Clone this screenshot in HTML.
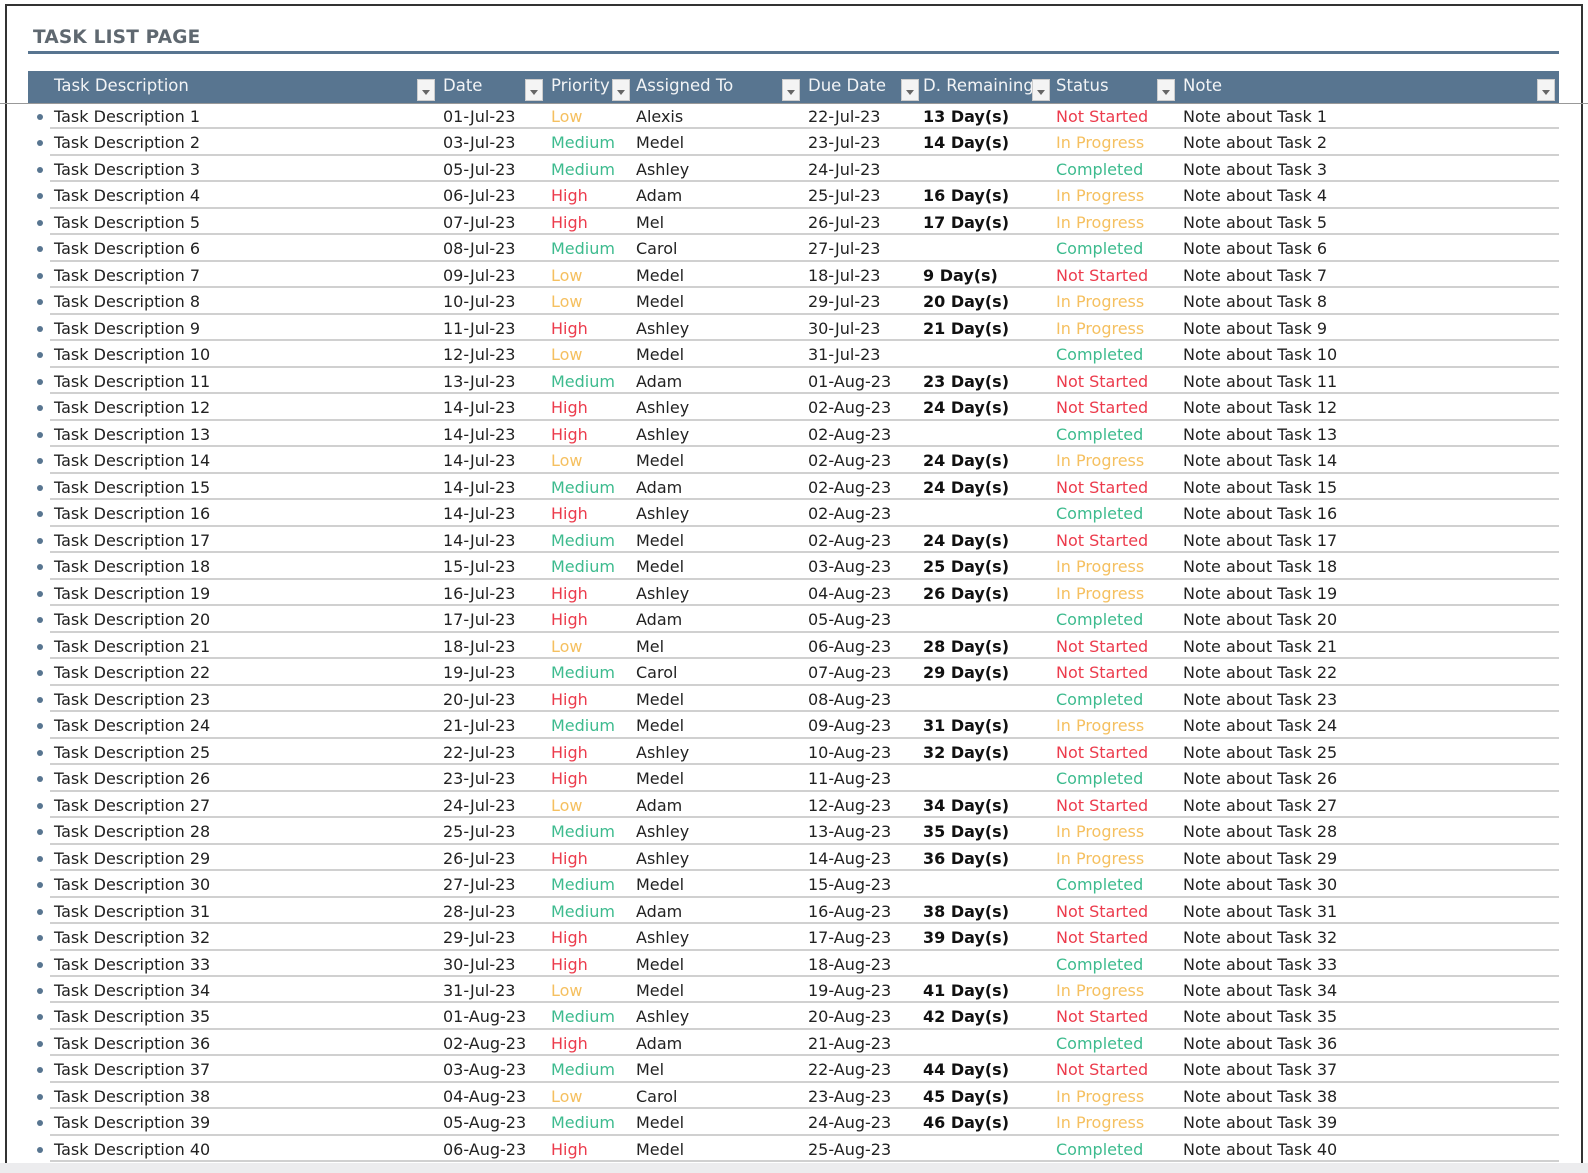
<!DOCTYPE html>
<html><head><meta charset="utf-8"><style>
*{margin:0;padding:0;box-sizing:border-box}
body{width:1588px;height:1173px;background:#fff;position:relative;overflow:hidden;font-family:"DejaVu Sans","Liberation Sans",sans-serif;font-size:16px;color:#222}
.frame{position:absolute;left:5px;top:4px;width:1578px;height:1160px;border:2px solid #333;border-bottom:none}
.bottom{position:absolute;left:0;top:1163px;width:1588px;height:10px;background:#ececee}
.title{position:absolute;left:33px;top:27px;font-size:18.5px;font-weight:bold;color:#5f6870;letter-spacing:0.2px}
.uline{position:absolute;left:28px;top:51px;width:1531px;height:3px;background:#587590}
.hdr{position:absolute;left:28px;top:71px;width:1531px;height:32px;background:#587590;color:#f2f4f6}
.hdr span{position:absolute;top:5px;font-size:16.5px}
.btn{position:absolute;top:8px;width:18px;height:22px;background:#f4f4f4;border:1px solid #ccc}
.btn:after{content:"";position:absolute;left:4px;top:10px;border-left:4px solid transparent;border-right:4px solid transparent;border-top:5px solid #666}
.gline{position:absolute;left:0;top:103px;width:1588px;height:1px;background:#999}
.rows{position:absolute;left:0;top:103px;width:1588px}
.r{position:relative;height:26.49px}
.r:after{content:"";position:absolute;left:50px;width:1509px;bottom:0;height:2px;background:#d0d0d0}
.r:before{content:"";position:absolute;left:37px;top:11px;width:6px;height:6px;border-radius:50%;background:#587590}
.r span{position:absolute;top:4px;white-space:nowrap}
.r span:nth-child(1){left:54px}
.r span:nth-child(2){left:443px}
.r span:nth-child(3){left:551px}
.r span:nth-child(4){left:636px}
.r span:nth-child(5){left:808px}
.r span:nth-child(6){left:923px;font-weight:bold;color:#111}
.r span:nth-child(7){left:1056px}
.r span:nth-child(8){left:1183px}
.L{color:#f5c060}.M{color:#3dbb8e}.H{color:#ec3b4c}
.N{color:#ec3b4c}.P{color:#f5c060}.C{color:#3dbb8e}
</style></head><body>
<div class="frame"></div>
<div class="bottom"></div>
<div class="title">TASK LIST PAGE</div>
<div class="uline"></div>
<div class="hdr">
<span style="left:26px">Task Description</span><div class="btn" style="left:389px"></div>
<span style="left:415px">Date</span><div class="btn" style="left:497px"></div>
<span style="left:523px">Priority</span><div class="btn" style="left:584px"></div>
<span style="left:608px">Assigned To</span><div class="btn" style="left:754px"></div>
<span style="left:780px">Due Date</span><div class="btn" style="left:873px"></div>
<span style="left:895px;width:112px;overflow:hidden">D. Remaining</span><div class="btn" style="left:1004px"></div>
<span style="left:1028px">Status</span><div class="btn" style="left:1129px"></div>
<span style="left:1155px">Note</span><div class="btn" style="left:1509px"></div>
</div>
<div class="gline"></div>
<div class="rows">
<div class="r"><span>Task Description 1</span><span>01-Jul-23</span><span class="L">Low</span><span>Alexis</span><span>22-Jul-23</span><span>13 Day(s)</span><span class="N">Not Started</span><span>Note about Task 1</span></div>
<div class="r"><span>Task Description 2</span><span>03-Jul-23</span><span class="M">Medium</span><span>Medel</span><span>23-Jul-23</span><span>14 Day(s)</span><span class="P">In Progress</span><span>Note about Task 2</span></div>
<div class="r"><span>Task Description 3</span><span>05-Jul-23</span><span class="M">Medium</span><span>Ashley</span><span>24-Jul-23</span><span></span><span class="C">Completed</span><span>Note about Task 3</span></div>
<div class="r"><span>Task Description 4</span><span>06-Jul-23</span><span class="H">High</span><span>Adam</span><span>25-Jul-23</span><span>16 Day(s)</span><span class="P">In Progress</span><span>Note about Task 4</span></div>
<div class="r"><span>Task Description 5</span><span>07-Jul-23</span><span class="H">High</span><span>Mel</span><span>26-Jul-23</span><span>17 Day(s)</span><span class="P">In Progress</span><span>Note about Task 5</span></div>
<div class="r"><span>Task Description 6</span><span>08-Jul-23</span><span class="M">Medium</span><span>Carol</span><span>27-Jul-23</span><span></span><span class="C">Completed</span><span>Note about Task 6</span></div>
<div class="r"><span>Task Description 7</span><span>09-Jul-23</span><span class="L">Low</span><span>Medel</span><span>18-Jul-23</span><span>9 Day(s)</span><span class="N">Not Started</span><span>Note about Task 7</span></div>
<div class="r"><span>Task Description 8</span><span>10-Jul-23</span><span class="L">Low</span><span>Medel</span><span>29-Jul-23</span><span>20 Day(s)</span><span class="P">In Progress</span><span>Note about Task 8</span></div>
<div class="r"><span>Task Description 9</span><span>11-Jul-23</span><span class="H">High</span><span>Ashley</span><span>30-Jul-23</span><span>21 Day(s)</span><span class="P">In Progress</span><span>Note about Task 9</span></div>
<div class="r"><span>Task Description 10</span><span>12-Jul-23</span><span class="L">Low</span><span>Medel</span><span>31-Jul-23</span><span></span><span class="C">Completed</span><span>Note about Task 10</span></div>
<div class="r"><span>Task Description 11</span><span>13-Jul-23</span><span class="M">Medium</span><span>Adam</span><span>01-Aug-23</span><span>23 Day(s)</span><span class="N">Not Started</span><span>Note about Task 11</span></div>
<div class="r"><span>Task Description 12</span><span>14-Jul-23</span><span class="H">High</span><span>Ashley</span><span>02-Aug-23</span><span>24 Day(s)</span><span class="N">Not Started</span><span>Note about Task 12</span></div>
<div class="r"><span>Task Description 13</span><span>14-Jul-23</span><span class="H">High</span><span>Ashley</span><span>02-Aug-23</span><span></span><span class="C">Completed</span><span>Note about Task 13</span></div>
<div class="r"><span>Task Description 14</span><span>14-Jul-23</span><span class="L">Low</span><span>Medel</span><span>02-Aug-23</span><span>24 Day(s)</span><span class="P">In Progress</span><span>Note about Task 14</span></div>
<div class="r"><span>Task Description 15</span><span>14-Jul-23</span><span class="M">Medium</span><span>Adam</span><span>02-Aug-23</span><span>24 Day(s)</span><span class="N">Not Started</span><span>Note about Task 15</span></div>
<div class="r"><span>Task Description 16</span><span>14-Jul-23</span><span class="H">High</span><span>Ashley</span><span>02-Aug-23</span><span></span><span class="C">Completed</span><span>Note about Task 16</span></div>
<div class="r"><span>Task Description 17</span><span>14-Jul-23</span><span class="M">Medium</span><span>Medel</span><span>02-Aug-23</span><span>24 Day(s)</span><span class="N">Not Started</span><span>Note about Task 17</span></div>
<div class="r"><span>Task Description 18</span><span>15-Jul-23</span><span class="M">Medium</span><span>Medel</span><span>03-Aug-23</span><span>25 Day(s)</span><span class="P">In Progress</span><span>Note about Task 18</span></div>
<div class="r"><span>Task Description 19</span><span>16-Jul-23</span><span class="H">High</span><span>Ashley</span><span>04-Aug-23</span><span>26 Day(s)</span><span class="P">In Progress</span><span>Note about Task 19</span></div>
<div class="r"><span>Task Description 20</span><span>17-Jul-23</span><span class="H">High</span><span>Adam</span><span>05-Aug-23</span><span></span><span class="C">Completed</span><span>Note about Task 20</span></div>
<div class="r"><span>Task Description 21</span><span>18-Jul-23</span><span class="L">Low</span><span>Mel</span><span>06-Aug-23</span><span>28 Day(s)</span><span class="N">Not Started</span><span>Note about Task 21</span></div>
<div class="r"><span>Task Description 22</span><span>19-Jul-23</span><span class="M">Medium</span><span>Carol</span><span>07-Aug-23</span><span>29 Day(s)</span><span class="N">Not Started</span><span>Note about Task 22</span></div>
<div class="r"><span>Task Description 23</span><span>20-Jul-23</span><span class="H">High</span><span>Medel</span><span>08-Aug-23</span><span></span><span class="C">Completed</span><span>Note about Task 23</span></div>
<div class="r"><span>Task Description 24</span><span>21-Jul-23</span><span class="M">Medium</span><span>Medel</span><span>09-Aug-23</span><span>31 Day(s)</span><span class="P">In Progress</span><span>Note about Task 24</span></div>
<div class="r"><span>Task Description 25</span><span>22-Jul-23</span><span class="H">High</span><span>Ashley</span><span>10-Aug-23</span><span>32 Day(s)</span><span class="N">Not Started</span><span>Note about Task 25</span></div>
<div class="r"><span>Task Description 26</span><span>23-Jul-23</span><span class="H">High</span><span>Medel</span><span>11-Aug-23</span><span></span><span class="C">Completed</span><span>Note about Task 26</span></div>
<div class="r"><span>Task Description 27</span><span>24-Jul-23</span><span class="L">Low</span><span>Adam</span><span>12-Aug-23</span><span>34 Day(s)</span><span class="N">Not Started</span><span>Note about Task 27</span></div>
<div class="r"><span>Task Description 28</span><span>25-Jul-23</span><span class="M">Medium</span><span>Ashley</span><span>13-Aug-23</span><span>35 Day(s)</span><span class="P">In Progress</span><span>Note about Task 28</span></div>
<div class="r"><span>Task Description 29</span><span>26-Jul-23</span><span class="H">High</span><span>Ashley</span><span>14-Aug-23</span><span>36 Day(s)</span><span class="P">In Progress</span><span>Note about Task 29</span></div>
<div class="r"><span>Task Description 30</span><span>27-Jul-23</span><span class="M">Medium</span><span>Medel</span><span>15-Aug-23</span><span></span><span class="C">Completed</span><span>Note about Task 30</span></div>
<div class="r"><span>Task Description 31</span><span>28-Jul-23</span><span class="M">Medium</span><span>Adam</span><span>16-Aug-23</span><span>38 Day(s)</span><span class="N">Not Started</span><span>Note about Task 31</span></div>
<div class="r"><span>Task Description 32</span><span>29-Jul-23</span><span class="H">High</span><span>Ashley</span><span>17-Aug-23</span><span>39 Day(s)</span><span class="N">Not Started</span><span>Note about Task 32</span></div>
<div class="r"><span>Task Description 33</span><span>30-Jul-23</span><span class="H">High</span><span>Medel</span><span>18-Aug-23</span><span></span><span class="C">Completed</span><span>Note about Task 33</span></div>
<div class="r"><span>Task Description 34</span><span>31-Jul-23</span><span class="L">Low</span><span>Medel</span><span>19-Aug-23</span><span>41 Day(s)</span><span class="P">In Progress</span><span>Note about Task 34</span></div>
<div class="r"><span>Task Description 35</span><span>01-Aug-23</span><span class="M">Medium</span><span>Ashley</span><span>20-Aug-23</span><span>42 Day(s)</span><span class="N">Not Started</span><span>Note about Task 35</span></div>
<div class="r"><span>Task Description 36</span><span>02-Aug-23</span><span class="H">High</span><span>Adam</span><span>21-Aug-23</span><span></span><span class="C">Completed</span><span>Note about Task 36</span></div>
<div class="r"><span>Task Description 37</span><span>03-Aug-23</span><span class="M">Medium</span><span>Mel</span><span>22-Aug-23</span><span>44 Day(s)</span><span class="N">Not Started</span><span>Note about Task 37</span></div>
<div class="r"><span>Task Description 38</span><span>04-Aug-23</span><span class="L">Low</span><span>Carol</span><span>23-Aug-23</span><span>45 Day(s)</span><span class="P">In Progress</span><span>Note about Task 38</span></div>
<div class="r"><span>Task Description 39</span><span>05-Aug-23</span><span class="M">Medium</span><span>Medel</span><span>24-Aug-23</span><span>46 Day(s)</span><span class="P">In Progress</span><span>Note about Task 39</span></div>
<div class="r"><span>Task Description 40</span><span>06-Aug-23</span><span class="H">High</span><span>Medel</span><span>25-Aug-23</span><span></span><span class="C">Completed</span><span>Note about Task 40</span></div>
</div>
</body></html>
